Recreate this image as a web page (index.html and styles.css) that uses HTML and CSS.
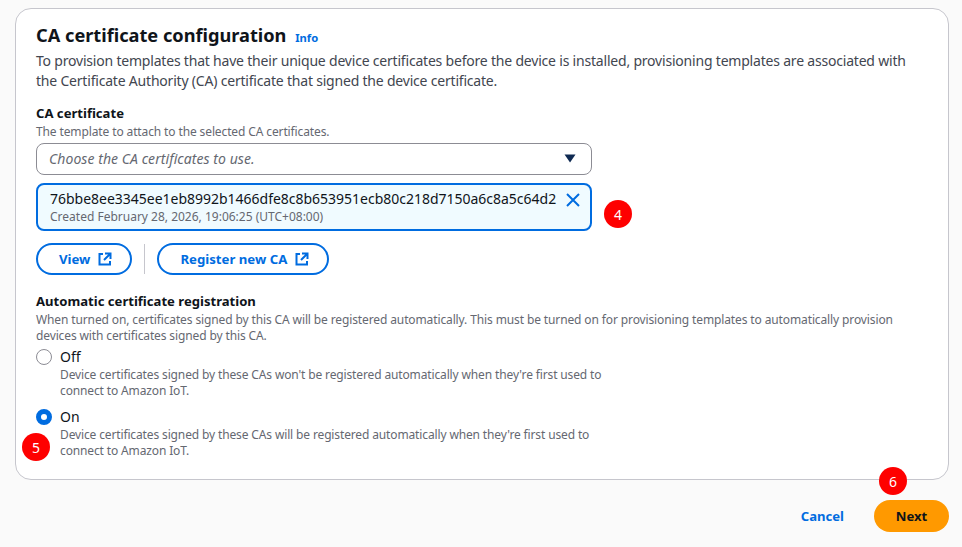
FILE: index.html
```html
<!DOCTYPE html>
<html lang="en">
<head>
<meta charset="utf-8">
<title>CA certificate configuration</title>
<link rel="stylesheet" href="styles.css">
</head>
<body>
<main class="page">
  <section class="card">
    <header class="card-head">
      <h2 class="title">CA certificate configuration <a class="info">Info</a></h2>
      <p class="lede">To provision templates that have their unique device certificates before the device is installed, provisioning templates are associated with the Certificate Authority (CA) certificate that signed the device certificate.</p>
    </header>
    <div class="field">
      <div class="label">CA certificate</div>
      <div class="hint">The template to attach to the selected CA certificates.</div>
      <div class="select">
        <span class="placeholder">Choose the CA certificates to use.</span>
        <svg class="caret" width="12" height="9" viewBox="0 0 12 9"><path d="M0.5 0.5H11.5L6 8.5Z" fill="#0f2a52"/></svg>
      </div>
      <div class="token">
        <div>
          <div class="token-id">76bbe8ee3345ee1eb8992b1466dfe8c8b653951ecb80c218d7150a6c8a5c64d2</div>
          <div class="token-meta">Created February 28, 2026, 19:06:25 (UTC+08:00)</div>
        </div>
        <svg class="dismiss" width="14" height="14" viewBox="0 0 14 14"><path d="M1 1L13 13M13 1L1 13" stroke="#006ce0" stroke-width="2" fill="none"/></svg>
      </div>
      <span class="badge badge-4">4</span>
      <div class="actions">
        <a class="btn">View
          <svg class="ext" width="14" height="14" viewBox="0 0 14 14"><path d="M5 2H1.500V12.500H12V9M7 1.500H12.500V7M12.500 1.500L6 8" stroke="#006ce0" stroke-width="2" fill="none"/></svg>
        </a>
        <span class="divider"></span>
        <a class="btn">Register new CA
          <svg class="ext" width="14" height="14" viewBox="0 0 14 14"><path d="M5 2H1.500V12.500H12V9M7 1.500H12.500V7M12.500 1.500L6 8" stroke="#006ce0" stroke-width="2" fill="none"/></svg>
        </a>
      </div>
    </div>
    <div class="field auto">
      <div class="label">Automatic certificate registration</div>
      <div class="hint">When turned on, certificates signed by this CA will be registered automatically. This must be turned on for provisioning templates to automatically provision devices with certificates signed by this CA.</div>
      <div class="radio-group">
        <div class="radio">
          <span class="dot"></span>
          <div>
            <div class="radio-label">Off</div>
            <div class="radio-desc">Device certificates signed by these CAs won't be registered automatically when they're first used to connect to Amazon IoT.</div>
          </div>
        </div>
        <div class="radio">
          <span class="dot dot-on"></span>
          <div>
            <div class="radio-label">On</div>
            <div class="radio-desc">Device certificates signed by these CAs will be registered automatically when they're first used to connect to Amazon IoT.</div>
          </div>
        </div>
      </div>
      <span class="badge badge-5">5</span>
    </div>
  </section>
  <footer class="footer">
    <a class="cancel">Cancel</a>
    <div class="next-wrap">
      <span class="badge badge-6">6</span>
      <a class="next">Next</a>
    </div>
  </footer>
</main>
</body>
</html>
```
FILE: styles.css
```css
* { box-sizing: border-box; }
html, body { margin: 0; height: 100%; }
body {
  background: #fafafa;
  font-family: "Noto Sans", "Open Sans", sans-serif;
  color: #0f141a;
  overflow: hidden;
}
.page { padding: 8px 13px 0 15px; }
.card {
  background: #fff;
  border: 1px solid #c6c6cd;
  border-radius: 16px;
  height: 472px;
  padding: 13px 20px 0;
}
.title {
  margin: 0;
  font-size: 18.2px;
  line-height: 27px;
  font-weight: 700;
}
.info {
  margin-left: 4px;
  font-size: 11.2px;
  font-weight: 700;
  color: #006ce0;
}
.lede {
  margin: 0;
  font-size: 14px;
  line-height: 20px;
  letter-spacing: -0.2px;
  color: #424650;
  width: 880px;
}
.field { position: relative; margin-top: 12px; }
.label {
  font-size: 13.1px;
  line-height: 21px;
  font-weight: 700;
}
.hint {
  font-size: 12px;
  line-height: 16px;
  letter-spacing: -0.12px;
  color: #656871;
}
.select {
  display: flex;
  align-items: center;
  justify-content: space-between;
  width: 556px;
  height: 32px;
  margin-top: 3px;
  padding: 0 15px 2px 12px;
  border: 1px solid #8c8c94;
  border-radius: 8px;
}
.placeholder {
  font-size: 14px;
  font-style: italic;
  letter-spacing: 0.06px;
  color: #656871;
}
.token {
  display: flex;
  justify-content: space-between;
  width: 556px;
  height: 48px;
  margin-top: 8px;
  padding: 4px 10px 0 12px;
  background: #f0fbff;
  border: 2px solid #006ce0;
  border-radius: 8px;
}
.token-id { font-size: 14px; line-height: 20px; letter-spacing: -0.015px; }
.token-meta { font-size: 12px; line-height: 16px; color: #656871; }
.dismiss { margin-top: 4px; }
.actions {
  display: flex;
  align-items: center;
  gap: 12px;
  margin-top: 12px;
}
.btn {
  display: flex;
  align-items: center;
  gap: 8px;
  height: 32px;
  padding: 0 18px 0 21px;
  border: 2px solid #006ce0;
  border-radius: 16px;
  font-size: 13.2px;
  font-weight: 700;
  color: #006ce0;
}
.divider { width: 1px; height: 30px; background: #c6c6cd; }
.auto { margin-top: 16px; }
.radio-group { margin-top: 3px; }
.radio { display: flex; gap: 8px; margin-bottom: 8px; }
.dot {
  flex: none;
  width: 16px;
  height: 16px;
  margin-top: 2px;
  border: 1px solid #8c8c94;
  border-radius: 50%;
  background: #fff;
}
.dot-on { border: 5px solid #006ce0; }
.radio-label { font-size: 14px; line-height: 20px; }
.radio-desc {
  width: 556px;
  font-size: 12px;
  line-height: 16px;
  letter-spacing: -0.135px;
  color: #656871;
}
.badge {
  position: absolute;
  display: flex;
  align-items: center;
  justify-content: center;
  width: 28px;
  height: 28px;
  border-radius: 50%;
  background: #fe0000;
  color: #fff;
  font-size: 14px;
}
.badge-4 { left: 568px; top: 97px; }
.badge-5 { left: -14px; top: 142px; }
.badge-6 { left: 5px; top: -33px; }
.footer {
  display: flex;
  justify-content: flex-end;
  align-items: center;
  gap: 30px;
  margin-top: 20px;
}
.cancel {
  font-size: 13.1px;
  font-weight: 700;
  color: #006ce0;
}
.next-wrap { position: relative; }
.next {
  display: flex;
  align-items: center;
  justify-content: center;
  width: 75px;
  height: 32px;
  border-radius: 16px;
  background: #ff9900;
  font-size: 13.1px;
  font-weight: 700;
}
```
